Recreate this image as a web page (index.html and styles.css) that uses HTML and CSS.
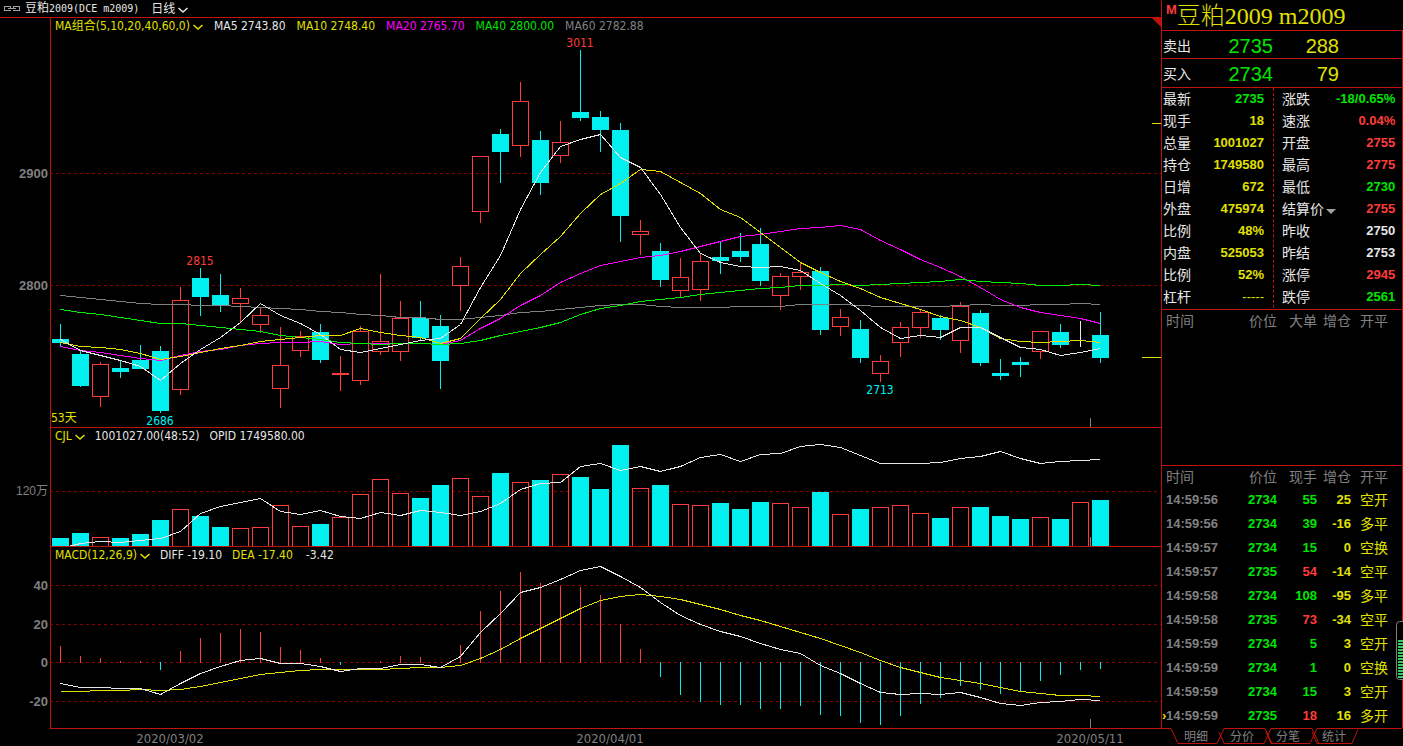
FILE: index.html
```html
<!DOCTYPE html>
<html lang="zh-CN">
<head>
<meta charset="UTF-8" />
<meta name="viewport" content="width=device-width, initial-scale=1" />
<title>豆粕2009</title>
<link rel="stylesheet" href="styles.css">
</head>
<body>

<main class="charts">
  <header class="topbar">
    <svg class="link-icon" width="16" height="6" viewBox="0 0 16 6">
      <path d="M6.5 1.5V.5h-6v4h6v-1M9.5 1.5V.5h6v4h-6v-1M4 2.5h8" />
    </svg>
    <span class="contract">豆粕<span class="mono">2009(DCE m2009)</span></span>
    <button class="period" type="button">日线<svg class="chevron" width="10" height="6" viewBox="0 0 10 6"><path d="M.5 1L5 5l4.5-4" /></svg></button>
    <svg class="corner" width="10" height="10" viewBox="0 0 10 10"><path d="M0 0h10v10z" /></svg>
  </header>

  <section class="pane">
    <div class="legend">
      <button class="yellow" type="button">MA组合(5,10,20,40,60,0)<svg class="chevron" width="10" height="6" viewBox="0 0 10 6"><path d="M.5 1L5 5l4.5-4" /></svg></button>
      <span class="white">MA5 2743.80</span>
      <span class="yellow">MA10 2748.40</span>
      <span class="magenta">MA20 2765.70</span>
      <span class="green">MA40 2800.00</span>
      <span class="gray">MA60 2782.88</span>
    </div>
    <svg class="plot" id="price" height="393"></svg>
  </section>

  <section class="pane">
    <div class="legend ruled">
      <button class="yellow" type="button">CJL<svg class="chevron" width="10" height="6" viewBox="0 0 10 6"><path d="M.5 1L5 5l4.5-4" /></svg></button>
      <span class="white">1001027.00(48:52)</span>
      <span class="white">OPID 1749580.00</span>
    </div>
    <svg class="plot" id="volume" height="102"></svg>
  </section>

  <section class="pane">
    <div class="legend ruled">
      <button class="yellow" type="button">MACD(12,26,9)<svg class="chevron" width="10" height="6" viewBox="0 0 10 6"><path d="M.5 1L5 5l4.5-4" /></svg></button>
      <span class="white">DIFF -19.10</span>
      <span class="yellow">DEA -17.40</span>
      <span class="white bar-value">-3.42</span>
    </div>
    <svg class="plot" id="macd" height="165"></svg>
  </section>

  <footer class="dates">
    <svg class="plot" id="dates" height="17"></svg>
  </footer>
</main>

<aside class="quote">
  <div class="panel">
    <h1 class="title"><sup>M</sup>豆粕2009 m2009</h1>
    <div class="book">
      <div class="order ask"><span class="label">卖出</span><span class="price green">2735</span><span class="size yellow">288</span></div>
      <div class="order bid"><span class="label">买入</span><span class="price green">2734</span><span class="size yellow">79</span></div>

      <div class="stats">
        <table class="stats-left">
          <tr><th>最新</th><td class="green">2735</td></tr>
          <tr><th>现手</th><td class="yellow">18</td></tr>
          <tr><th>总量</th><td class="yellow">1001027</td></tr>
          <tr><th>持仓</th><td class="yellow">1749580</td></tr>
          <tr><th>日增</th><td class="yellow">672</td></tr>
          <tr><th>外盘</th><td class="yellow">475974</td></tr>
          <tr><th>比例</th><td class="yellow">48%</td></tr>
          <tr><th>内盘</th><td class="yellow">525053</td></tr>
          <tr><th>比例</th><td class="yellow">52%</td></tr>
          <tr><th>杠杆</th><td class="yellow empty">-----</td></tr>
        </table>
        <table class="stats-right">
          <tr><th>涨跌</th><td class="green">-18/0.65%</td></tr>
          <tr><th>速涨</th><td class="red">0.04%</td></tr>
          <tr><th>开盘</th><td class="red">2755</td></tr>
          <tr><th>最高</th><td class="red">2775</td></tr>
          <tr><th>最低</th><td class="green">2730</td></tr>
          <tr><th><button type="button">结算价<svg class="caret" width="10" height="5" viewBox="0 0 10 5"><path d="M0 0h10l-5 5z" /></svg></button></th><td class="red">2755</td></tr>
          <tr><th>昨收</th><td class="white">2750</td></tr>
          <tr><th>昨结</th><td class="white">2753</td></tr>
          <tr><th>涨停</th><td class="red">2945</td></tr>
          <tr><th>跌停</th><td class="green">2561</td></tr>
        </table>
      </div>

      <div class="big-trades">
        <table class="ticks">
          <thead><tr><th>时间</th><th>价位</th><th>大单</th><th>增仓</th><th>开平</th></tr></thead>
        </table>
      </div>

      <table class="ticks">
        <thead><tr><th>时间</th><th>价位</th><th>现手</th><th>增仓</th><th>开平</th></tr></thead>
        <tbody id="ticks"></tbody>
      </table>
      <svg class="handle" width="7" height="60" viewBox="0 0 7 60">
        <rect x=".5" y=".5" width="14" height="58" rx="3" />
        <path d="M4.5 19v38" />
      </svg>
    </div>
  </div>

  <nav class="tabs">
    <svg class="tab-lines" width="242" height="16">
      <path d="M0 .5h10l7 15h39l7-15h41l7 15M58 4l5 11.500h40l7-15h41l7 15M105 4l5 11.500h39l7-15h85M151 4l5 11.500h35l6-14" />
    </svg>
    <button type="button">明细</button>
    <button type="button">分价</button>
    <button type="button">分笔</button>
    <button type="button">统计</button>
  </nav>
</aside>

<script src="script.js"></script>
</body>
</html>
```
FILE: styles.css
```css
* {
  box-sizing: border-box;
}
body {
  margin: 0;
  display: flex;
  min-height: 100vh;
  background: #000;
  color: #e6e6e6;
  font-family: "DejaVu Sans Condensed", "Noto Sans CJK SC", sans-serif;
  font-size: 12px;
  line-height: 16px;
}
button {
  padding: 0;
  border: 0;
  background: none;
  color: inherit;
  font: inherit;
  white-space: nowrap;
  cursor: pointer;
}
.white { color: #e6e6e6; }
.yellow { color: #e1e100; }
.magenta { color: #ff00ff; }
.green { color: #00e600; }
.red { color: #ff3c39; }
.gray { color: #808080; }

.charts {
  flex: 1;
  min-width: 0;
}
.topbar {
  position: relative;
  display: flex;
  align-items: center;
  height: 18px;
  padding: 0 4px;
  border-bottom: 1px solid #c0140a;
}
.link-icon {
  margin-right: 5px;
  fill: none;
  stroke: #a0a0a0;
  shape-rendering: crispEdges;
}
.mono {
  font-family: "DejaVu Sans Mono", monospace;
  font-size: 10px;
}
.period {
  margin-left: 12px;
}
.chevron {
  margin-left: 3px;
  fill: none;
  stroke: currentColor;
  stroke-width: 1.5;
}
.corner {
  position: absolute;
  right: 0;
  top: 17px;
  fill: #c0140a;
}
.legend {
  display: flex;
  gap: 11px;
  height: 16px;
  margin-left: 50px;
  padding-left: 4px;
  border-left: 1px solid #c0140a;
  white-space: nowrap;
}
.legend.ruled {
  height: 17px;
  gap: 10px;
  border-top: 1px solid #c0140a;
}
.bar-value {
  margin-left: 3px;
}
.plot {
  display: block;
  width: 100%;
  overflow: hidden;
}
.dates::before {
  content: "";
  display: block;
  margin-left: 50px;
  border-top: 1px solid #c0140a;
}

/* chart marks */
.plot line,
.plot rect,
.plot polyline {
  fill: none;
  shape-rendering: crispEdges;
}
.plot .frame { stroke: #c0140a; }
.plot .grid { stroke: #8c0000; stroke-dasharray: 3 3; }
.plot .up { stroke: #ff3c39; }
.plot .down { stroke: #00f0f0; }
.plot rect.down { fill: #00f0f0; }
.plot .flat, .plot .line-white { stroke: #e6e6e6; }
.plot .line-yellow { stroke: #e1e100; }
.plot .line-magenta { stroke: #ff00ff; }
.plot .line-green { stroke: #00f000; }
.plot .line-gray { stroke: #808080; }
.plot text { fill: #808080; }
.plot .axis {
  font-family: "Liberation Sans", "Noto Sans CJK SC", sans-serif;
  font-size: 13px;
  font-weight: bold;
  text-anchor: end;
}
.plot .axis.thin {
  font-size: 12px;
  font-weight: normal;
}
.plot .mid { text-anchor: middle; }
.plot .date { font-size: 13px; }
.plot .text-red { fill: #ff3c39; }
.plot .text-cyan { fill: #00f0f0; }
.plot .text-yellow { fill: #e1e100; }

/* quote panel */
.quote {
  width: 242px;
  font-family: "Liberation Sans", "Noto Sans CJK SC", sans-serif;
}
.panel {
  border-left: 1px solid #c0140a;
}
.title {
  display: flex;
  height: 30px;
  margin: 0;
  padding-left: 4px;
  color: #e1e100;
  font-family: "Liberation Serif", "Noto Sans CJK SC", serif;
  font-size: 24px;
  font-weight: 300;
  line-height: 32px;
  white-space: pre;
}
.title sup {
  color: #ff3c39;
  font: bold 13px/20px "Liberation Sans", sans-serif;
}
.book {
  position: relative;
  border-top: 1px solid #c0140a;
  border-right: 1px solid #c0140a;
}
.order {
  display: flex;
  align-items: center;
  height: 28px;
  padding-top: 2px;
  padding-left: 1px;
  border-bottom: 1px solid #c0140a;
  font-size: 20px;
}
.order.bid {
  height: 29px;
}
.order .label {
  width: 40px;
  font-size: 14px;
}
.order .price {
  width: 70px;
  text-align: right;
}
.order .size {
  width: 66px;
  text-align: right;
}
table {
  border-collapse: collapse;
}
th {
  padding: 0;
  font-size: 14px;
  font-weight: normal;
  text-align: left;
}
td {
  padding: 0;
  font-size: 13px;
  font-weight: bold;
  text-align: right;
}
.stats {
  display: flex;
  padding-bottom: 1px;
  border-bottom: 1px solid #c0140a;
}
.stats tr {
  height: 22px;
}
.stats-left {
  flex: none;
  width: 101px;
  margin-left: 1px;
  margin-right: 9px;
}
.stats-right {
  flex: 1;
  border-collapse: separate;
  border-spacing: 0;
  border-left: 1px dashed #c0140a;
  padding: 0 9px 0 8px;
}
.stats .empty {
  font-weight: normal;
}
.caret {
  margin-left: 2px;
  fill: #a0a0a0;
}
.big-trades {
  height: 156px;
  border-bottom: 1px solid #c0140a;
}
.ticks {
  width: 100%;
  table-layout: fixed;
}
.ticks th {
  height: 22px;
  color: #808080;
  text-align: right;
}
.ticks th:nth-child(1),
.ticks td:nth-child(1) {
  width: 70px;
  padding-left: 4px;
  text-align: left;
}
.ticks th:nth-child(2) { width: 45px; }
.ticks th:nth-child(3) { width: 40px; }
.ticks th:nth-child(4) { width: 34px; }
.ticks th:nth-child(5),
.ticks td:nth-child(5) {
  padding-left: 9px;
  text-align: left;
}
.ticks td {
  height: 24px;
}
.ticks td:nth-child(5) {
  font-size: 14px;
  font-weight: normal;
}
.ticks tbody tr:last-child td:first-child::before {
  content: "›";
  position: absolute;
  left: 0;
  color: #e1e100;
}
.handle {
  position: absolute;
  right: -1px;
  top: 590px;
  fill: #000;
  stroke: #808080;
}
.handle path {
  stroke: #30d060;
  stroke-width: 5;
  stroke-dasharray: 2 1;
}
.tabs {
  position: relative;
  display: flex;
  gap: 22px;
  padding-left: 23px;
  color: #808080;
  font-size: 12px;
}
.tabs button {
  position: relative;
  height: 17px;
}
.tab-lines {
  position: absolute;
  left: 0;
  top: 0;
  fill: none;
  stroke: #c0140a;
}
```
FILE: script.js
```js
const STEP = 20;
const FIRST_X = 60;

// [high, body top, body bottom, low, direction]
const candles = [
  [324,339,343,346,'d'], [351,354,386,387,'d'], [362,364,397,407,'u'], [361,368,372,378,'d'],
  [345,360,369,369,'d'], [346,351,411,413,'d'], [287,300,390,395,'u'], [268,278,297,316,'d'],
  [274,295,305,312,'d'], [288,298,304,322,'u'], [308,315,325,333,'u'], [327,365,389,408,'u'],
  [331,336,351,357,'u'], [324,332,360,363,'d'], [356,373,375,391,'u'], [326,331,381,385,'u'],
  [274,341,352,355,'u'], [301,318,352,361,'u'], [301,318,338,340,'d'], [315,326,361,389,'d'],
  [257,266,286,311,'u'], [156,156,212,223,'u'], [129,134,152,183,'d'], [82,101,146,157,'u'],
  [131,140,183,195,'d'], [121,142,156,163,'u'], [50,112,118,121,'d'], [111,117,130,152,'d'],
  [123,130,216,242,'d'], [220,231,235,255,'u'], [243,251,280,287,'d'], [258,277,291,298,'u'],
  [253,261,290,301,'u'], [242,257,261,274,'d'], [233,251,257,262,'d'], [228,244,281,286,'d'],
  [273,276,296,310,'u'], [262,272,277,290,'u'], [267,271,330,335,'d'], [309,317,327,336,'u'],
  [320,329,358,363,'d'], [355,361,374,382,'u'], [322,327,343,357,'u'], [310,312,328,338,'u'],
  [315,318,330,340,'d'], [302,306,341,353,'u'], [310,313,363,366,'d'], [359,373,376,380,'d'],
  [357,362,365,377,'d'], [331,331,352,359,'u'], [324,332,345,348,'d'], [321,340,341,347,'f'],
  [312,335,358,363,'d']
];

const ma5 = [339,350,355,360,366,380,363,349,337,322,303,315,323,334,349,352,348,344,340,338,324,287,255,209,172,146,139,134,157,167,194,227,253,262,266,267,266,270,283,295,310,327,338,335,337,327,327,337,347,349,355,352,348];
const ma10 = [342,346,347,349,353,359,356,352,348,345,341,339,337,335,335,328,332,335,337,343,338,318,299,273,254,236,213,194,183,169,171,182,193,209,217,232,247,262,272,281,288,297,303,309,316,320,327,338,341,342,341,340,342];
const ma20 = [346,350,352,355,358,360,355,351,349,345,343,342,342,341,344,343,343,343,343,344,340,328,318,305,295,282,273,265,261,257,255,251,246,241,236,234,231,228,227,225,229,240,249,259,267,276,287,299,307,312,315,318,323];
const ma40 = [309,312,314,317,320,323,323,325,327,329,331,335,337,339,342,343,344,343,343,344,343,340,335,331,327,322,314,308,305,301,299,297,294,292,290,288,287,285,285,284,285,284,283,282,281,279,281,282,283,285,285,284,285];
const ma60 = [295,297,299,301,303,304,304,305,305,306,307,308,309,311,312,314,315,317,317,319,319,317,315,312,311,309,307,305,304,304,306,307,307,307,306,306,306,304,304,304,305,306,306,306,306,305,304,305,305,304,304,303,304];

const volume = [538,533,537,538,534,520,509,516,527,528,527,505,526,524,517,494,479,493,498,485,478,496,473,482,480,474,477,489,445,488,485,504,505,503,509,502,503,507,492,514,509,507,505,513,518,507,507,516,519,517,519,502,500];
const opid = [548,543,541,542,540,538,531,513,506,502,498,511,514,510,516,518,512,515,510,512,515,511,503,489,483,482,466,463,470,466,471,466,457,454,461,454,453,446,444,447,455,463,463,463,462,458,456,451,458,463,461,460,459];

const ZERO = 662;
const bars = [646,656,658,661,661,670,651,638,633,629,632,647,650,658,665,662,661,656,657,662,645,611,591,572,583,586,587,595,624,649,677,695,702,705,705,709,709,706,715,716,723,725,716,704,698,686,690,694,692,681,675,670,669];
const diff = [683,687,687,688,688,694,683,673,666,660,658,663,663,666,671,668,668,664,664,667,656,632,613,592,587,579,570,566,576,587,602,615,624,631,636,643,649,653,665,673,683,692,694,693,694,692,697,703,705,702,701,699,700];
const dea = [691,691,690,690,689,690,689,686,682,678,674,672,670,669,669,669,669,668,667,667,665,658,649,638,628,618,608,600,596,594,596,599,604,609,615,620,626,632,638,645,652,660,667,672,677,680,683,687,691,693,695,695,696];

const ticks = [
  ['14:59:56', 2734, 55, 25, '空开', 'green'],
  ['14:59:56', 2734, 39, -16, '多平', 'green'],
  ['14:59:57', 2734, 15, 0, '空换', 'green'],
  ['14:59:57', 2735, 54, -14, '空平', 'red'],
  ['14:59:58', 2734, 108, -95, '多平', 'green'],
  ['14:59:58', 2735, 73, -34, '空平', 'red'],
  ['14:59:59', 2734, 5, 3, '空开', 'green'],
  ['14:59:59', 2734, 1, 0, '空换', 'green'],
  ['14:59:59', 2734, 15, 3, '空开', 'green'],
  ['14:59:59', 2735, 18, 16, '多开', 'red']
];

const xAt = i => FIRST_X + i * STEP;
const line = (x1, y1, x2, y2, cls) => `<line x1="${x1}" y1="${y1}" x2="${x2}" y2="${y2}" class="${cls}"/>`;
const vline = (x, y1, y2, cls) => line(x + 0.5, y1, x + 0.5, y2, cls);
const hline = (x1, x2, y, cls) => line(x1, y + 0.5, x2, y + 0.5, cls);
const grid = y => hline(50, 4000, y, 'grid');
const text = (x, y, str, cls) => `<text x="${x}" y="${y}" class="${cls}">${str}</text>`;
const box = (x, top, bottom, cls) => `<rect x="${x - 7.5}" y="${top + 0.5}" width="16" height="${bottom - top - 1}" class="${cls}"/>`;

function curve(values, cls) {
  const points = values.map((y, i) => `${xAt(i) + 0.5},${y + 0.5}`).join(' ');
  return `<polyline points="${points}" class="line-${cls}"/>`;
}

function candle([high, top, bottom, low, dir], i) {
  const x = xAt(i);
  if (dir === 'f') {
    return vline(x, high, low, 'flat') + hline(x - 5, x + 5, top, 'flat');
  }
  const cls = dir === 'u' ? 'up' : 'down';
  return vline(x, high, top, cls) + vline(x, bottom, low, cls) + box(x, top, bottom, cls);
}

function draw(id, top, content) {
  document.getElementById(id).innerHTML = `<g transform="translate(0 ${-top})">${content}</g>`;
}

draw('price', 34, [
  vline(50, 0, 800, 'frame'),
  grid(173), grid(285),
  candles.map(candle).join(''),
  curve(ma60, 'gray'), curve(ma20, 'magenta'), curve(ma40, 'green'),
  curve(ma10, 'yellow'), curve(ma5, 'white'),
  vline(1090, 418, 428, 'line-gray'),
  hline(1152, 1161, 123, 'line-yellow'),
  hline(1142, 1161, 357, 'line-yellow'),
  text(48, 178, '2900', 'axis'), text(48, 290, '2800', 'axis'),
  text(200, 265, '2815', 'mid text-red'), text(580, 47, '3011', 'mid text-red'),
  text(160, 425, '2686', 'mid text-cyan'), text(880, 394, '2713', 'mid text-cyan'),
  text(51, 422, '53天', 'text-yellow')
].join(''));

draw('volume', 444, [
  vline(50, 0, 800, 'frame'),
  grid(491),
  volume.map((y, i) => box(xAt(i), y, 548, candles[i][4] === 'd' ? 'down' : 'up')).join(''),
  curve(opid, 'white'),
  vline(1090, 537, 547, 'line-gray'),
  text(48, 495, '120万', 'axis thin')
].join(''));

draw('macd', 563, [
  vline(50, 0, 800, 'frame'),
  [585, 624, 662, 701].map(grid).join(''),
  bars.map((y, i) => y > ZERO ? vline(xAt(i), ZERO, y, 'down') : y < ZERO ? vline(xAt(i), y, ZERO + 1, 'up') : '').join(''),
  curve(dea, 'yellow'), curve(diff, 'white'),
  vline(1090, 719, 729, 'line-gray'),
  text(48, 590, '40', 'axis'), text(48, 629, '20', 'axis'),
  text(48, 667, '0', 'axis'), text(48, 706, '-20', 'axis')
].join(''));

draw('dates', 729, [
  text(170, 743, '2020/03/02', 'mid date'),
  text(610, 743, '2020/04/01', 'mid date'),
  text(1090, 743, '2020/05/11', 'mid date')
].join(''));

document.getElementById('ticks').innerHTML = ticks.map(([time, price, lots, change, kind, side]) => `
  <tr><td class="gray">${time}</td><td class="green">${price}</td><td class="${side}">${lots}</td><td class="yellow">${change}</td><td class="yellow">${kind}</td></tr>`).join('');
```
